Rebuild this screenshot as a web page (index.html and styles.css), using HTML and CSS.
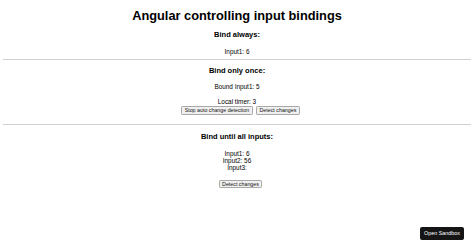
FILE: index.html
```html
<!DOCTYPE html>
<html lang="en">
<head>
<meta charset="utf-8">
<title>Angular controlling input bindings</title>
<link rel="stylesheet" href="styles.css">
</head>
<body>
<main class="page">
  <h1 class="title">Angular controlling input bindings</h1>

  <section class="section section-first">
    <h3 class="section-title">Bind always:</h3>
    <p class="line line-first">Input1: 6</p>
  </section>

  <hr class="divider">

  <section class="section">
    <h3 class="section-title">Bind only once:</h3>
    <p class="line line-first">Bound Input1: 5</p>
    <p class="line line-timer">Local timer: 3</p>
    <div class="actions">
      <button class="btn" type="button">Stop auto change detection</button>
      <button class="btn" type="button">Detect changes</button>
    </div>
  </section>

  <hr class="divider divider-second">

  <section class="section">
    <h3 class="section-title">Bind until all inputs:</h3>
    <div class="lines line-first">
      <div class="line">Input1: 6</div>
      <div class="line">Input2: 56</div>
      <div class="line">Input3:</div>
    </div>
    <div class="actions actions-spaced">
      <button class="btn" type="button">Detect changes</button>
    </div>
  </section>
</main>

<a class="sandbox-btn" href="#">Open Sandbox</a>
</body>
</html>
```

FILE: styles.css
```css
html, body {
  margin: 0;
  padding: 0;
  background: #ffffff;
}

body {
  font-family: "Liberation Sans", Arial, Helvetica, sans-serif;
  font-size: 6.4px;
  line-height: 7.36px;
  color: #000000;
}

.page {
  padding: 0 3.2px;
  text-align: center;
}

.title {
  margin: 8.6px 0 0;
  font-size: 12.8px;
  line-height: 14.7px;
  font-weight: 700;
}

.section-title {
  margin: 0;
  padding-top: 8px;
  font-size: 7.5px;
  line-height: 8.6px;
  font-weight: 700;
}

.line {
  margin: 0;
}

.line-first {
  margin-top: 8px;
}

.line-timer {
  margin-top: 7.6px;
}

.divider {
  margin: 4px 0 0;
  border: 0;
  height: 1px;
  background: #cfcfcf;
}

.divider + .section .section-title {
  padding-top: 6.3px;
}

.divider-second {
  margin-top: 9.3px;
}

.divider-second + .section .section-title {
  padding-top: 8.1px;
}

.actions {
  margin-top: 0.5px;
  padding-left: 7px;
  display: flex;
  justify-content: center;
  gap: 3.6px;
}

.actions-spaced {
  margin-top: 8.1px;
}

.btn {
  font-family: "Liberation Sans", Arial, Helvetica, sans-serif;
  font-size: 5.3px;
  line-height: 6.2px;
  height: 8.7px;
  padding: 0 2.4px;
  margin: 0;
  color: #111111;
  background: #f0f0f0;
  border: 0.8px solid #a8a8a8;
  border-radius: 1.2px;
}

.sandbox-btn {
  position: fixed;
  right: 10px;
  bottom: 8px;
  display: inline-block;
  padding: 0 4px;
  height: 13px;
  line-height: 13px;
  font-size: 5.4px;
  color: #ffffff;
  background: #151515;
  border-radius: 2px;
  text-decoration: none;
}
```
